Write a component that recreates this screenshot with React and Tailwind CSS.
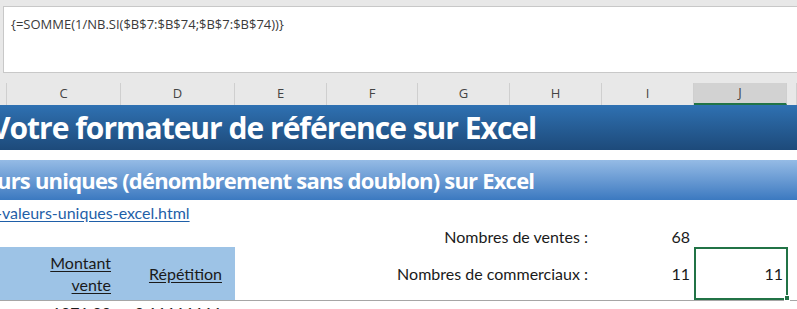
import React from 'react';

const cols = [
  { id: 'B', w: 'w-[7px]' },
  { id: 'C', w: 'w-[114px]' },
  { id: 'D', w: 'w-[114px]' },
  { id: 'E', w: 'w-[92px]' },
  { id: 'F', w: 'w-[91px]' },
  { id: 'G', w: 'w-[92px]' },
  { id: 'H', w: 'w-[92px]' },
  { id: 'I', w: 'w-[92px]' },
  { id: 'J', w: 'w-[93px]' },
  { id: 'K', w: 'flex-1' },
];

const App = () => {
  return (
    <div className="w-[797px] h-[309px] overflow-hidden bg-white font-['Lato',sans-serif] text-[16px] text-[#1a1a1a]">
      {/* Formula bar */}
      <div className="h-[83px] bg-[#e8e8e8] pt-[6px] pl-[3px]">
        <div className="h-[67px] bg-white border-t border-l border-b border-[#c8c8c8] pl-[7px] pt-[9px] text-[13px] leading-[16px] text-[#3a3a3a] font-['Open_Sans',sans-serif]">
          {'{=SOMME(1/NB.SI($B$7:$B$74;$B$7:$B$74))}'}
        </div>
      </div>

      {/* Column headers */}
      <div className="flex h-[22px] bg-[#e8e8e8] font-['Open_Sans',sans-serif] text-[13px] text-[#444]">
        {cols.map((c) => (
          <div
            key={c.id}
            className={`${c.w} flex items-center justify-center border-r border-[#cfcfcf] ${
              c.id === 'J' ? 'bg-[#d2d2d2] border-b-2 border-b-[#217346]' : ''
            }`}
          >
            {c.id === 'B' || c.id === 'K' ? '' : c.id}
          </div>
        ))}
      </div>

      {/* Main title */}
      <div className="h-[45px] bg-gradient-to-b from-[#2f71b2] to-[#1d4a7a] flex items-center overflow-hidden">
        <span className="ml-[-9px] whitespace-nowrap text-white font-bold text-[30px] leading-none font-['Open_Sans',sans-serif] tracking-[-1px]">
          Votre formateur de référence sur Excel
        </span>
      </div>

      <div className="h-[10px]" />

      {/* Sub title */}
      <div className="h-[40px] bg-gradient-to-b from-[#95bbe5] to-[#3b79c0] flex items-center overflow-hidden">
        <span className="ml-[-3px] whitespace-nowrap text-white font-bold text-[22px] leading-none font-['Open_Sans',sans-serif] tracking-[-0.8px]">
          urs uniques (dénombrement sans doublon) sur Excel
        </span>
      </div>

      {/* Link row */}
      <div className="h-[25px] flex items-center">
        <span className="ml-[-4px] whitespace-nowrap text-[#1f5fa8] underline underline-offset-2">-valeurs-uniques-excel.html</span>
      </div>

      {/* Ventes row */}
      <div className="h-[22px] flex items-end">
        <div className="w-[602px] text-right pr-[14px] leading-[20px]">Nombres de ventes :</div>
        <div className="w-[92px] text-right pr-[4px] leading-[20px]">68</div>
      </div>

      {/* Header + commerciaux row */}
      <div className="h-[53px] flex">
        <div className="w-[235px] bg-[#9dc3e6] flex">
          <div className="w-[121px] flex flex-col justify-center items-end pr-[10px] leading-[22px]">
            <span className="underline underline-offset-2">Montant </span>
            <span className="underline underline-offset-2">vente</span>
          </div>
          <div className="w-[114px] flex items-center justify-end pr-[13px]">
            <span className="underline underline-offset-2">Répétition</span>
          </div>
        </div>
        <div className="w-[367px] flex items-center justify-end pr-[14px]">Nombres de commerciaux :</div>
        <div className="w-[92px] flex items-center justify-end pr-[4px]">11</div>
        <div className="relative w-[94px] border-2 border-[#217346] flex items-center justify-end pr-[3px]">
          11
          <div className="absolute right-[-4px] bottom-[-3px] w-[6px] h-[6px] bg-[#217346] border border-white" />
        </div>
      </div>

      {/* Data row (cut) */}
      <div className="border-t border-[#a6a6a6] flex leading-[18px] pt-[3px]">
        <div className="w-[121px] text-right pr-[10px]">1071,00</div>
        <div className="w-[114px] text-right pr-[13px]">0,11111111</div>
      </div>
    </div>
  );
};

export default App;
